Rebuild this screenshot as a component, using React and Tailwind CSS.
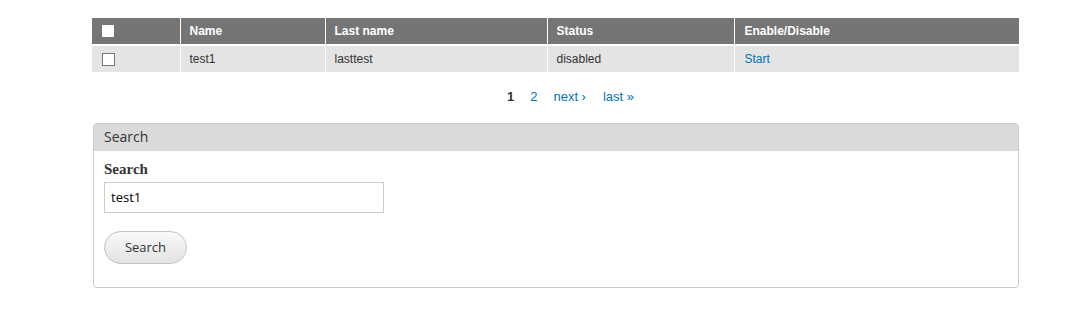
export default function App() {
  return (
    <div className="w-[1086px] h-[310px] bg-white pt-[18px]" style={{ fontFamily: '"Liberation Sans", Arial, sans-serif' }}>
      <div className="ml-[92px] w-[927px]">
        <table className="w-full border-collapse text-[12px]">
          <thead>
            <tr className="bg-[#757575] text-white font-bold h-[27px]">
              <th className="w-[88px] border-r border-white text-left pl-[10px] font-bold">
                <div className="w-[12px] h-[12px] bg-white" />
              </th>
              <th className="w-[145px] border-r border-white text-left pl-[9px] font-bold">Name</th>
              <th className="w-[222px] border-r border-white text-left pl-[9px] font-bold">Last name</th>
              <th className="w-[187px] border-r border-white text-left pl-[9px] font-bold">Status</th>
              <th className="text-left pl-[10px] font-bold">Enable/Disable</th>
            </tr>
          </thead>
          <tbody>
            <tr className="bg-[#e4e4e4] text-[#333] h-[27px] border-t-2 border-white">
              <td className="border-r border-white pl-[10px]">
                <div className="w-[13px] h-[13px] bg-white border border-[#777]" />
              </td>
              <td className="border-r border-white pl-[9px]">test1</td>
              <td className="border-r border-white pl-[9px]">lasttest</td>
              <td className="border-r border-white pl-[9px]">disabled</td>
              <td className="pl-[10px]">
                <a className="text-[#0073ba]">Start</a>
              </td>
            </tr>
          </tbody>
        </table>

        <div className="flex justify-center pl-[30px] text-[13px] mt-[16px] h-[18px] items-center">
          <span className="font-bold text-[#333]">1</span>
          <a className="text-[#0073ba] ml-[16px]">2</a>
          <a className="text-[#0073ba] ml-[16px]">next ›</a>
          <a className="text-[#0073ba] ml-[17px]">last »</a>
        </div>

        <div className="mt-[17px] ml-[1px] w-[926px] h-[165px] border border-[#ccc] rounded-[4px] overflow-hidden">
          <div className="h-[27px] bg-[#dadada] flex items-center pl-[10px] pb-[2px] text-[14px] text-[#333]" style={{ fontFamily: '"Open Sans", sans-serif' }}>
            Search
          </div>
          <div className="pl-[10px] pt-[10px]">
            <div className="text-[15px] font-bold text-[#333] leading-[17px]" style={{ fontFamily: '"Liberation Serif", Georgia, serif' }}>
              Search
            </div>
            <div className="mt-[4px] w-[280px] h-[31px] border border-[#ccc] flex items-center pl-[6px] text-[13px] text-black" style={{ fontFamily: '"Open Sans", sans-serif' }}>
              test1
            </div>
            <button className="mt-[18px] w-[83px] h-[33px] rounded-full border border-[#c2c2c2] bg-gradient-to-b from-[#f9f9f9] to-[#e3e3e3] text-[13px] text-[#333]" style={{ fontFamily: '"Open Sans", sans-serif' }}>
              Search
            </button>
          </div>
        </div>
      </div>
    </div>
  );
}
